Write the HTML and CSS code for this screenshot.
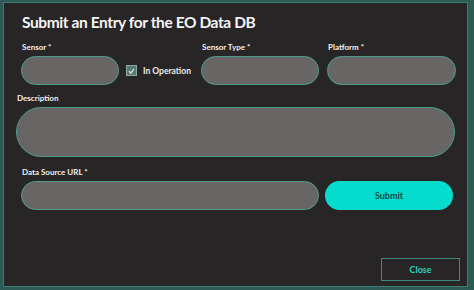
FILE: index.html
```html
<!DOCTYPE html>
<html lang="en">
<head>
    <meta charset="UTF-8">
    <title>Submit an Entry</title>
    <link rel="stylesheet" href="styles.css">
</head>
<body>
    <div class="modal">
        <h1 class="modal-title">Submit an Entry for the EO Data DB</h1>

        <form class="entry-form">
            <div class="row row-top">
                <div class="field field-sensor">
                    <label>Sensor *</label>
                    <input type="text" class="pill">
                </div>
                <label class="check">
                    <span class="check-box">
                        <svg width="7" height="6" viewBox="0 0 7 6"><path d="M1 3.2 L2.8 5 L6 1" fill="none" stroke="#e8e8e8" stroke-width="1.2"/></svg>
                    </span>
                    In Operation
                </label>
                <div class="field field-type">
                    <label>Sensor Type *</label>
                    <input type="text" class="pill">
                </div>
                <div class="field field-platform">
                    <label>Platform *</label>
                    <input type="text" class="pill">
                </div>
            </div>

            <div class="field field-desc">
                <label>Description</label>
                <textarea class="pill desc"></textarea>
            </div>

            <div class="row row-url">
                <div class="field field-url">
                    <label>Data Source URL *</label>
                    <input type="text" class="pill">
                </div>
                <button type="button" class="submit">Submit</button>
            </div>
        </form>

        <div class="footer">
            <button type="button" class="close">Close</button>
        </div>
    </div>
</body>
</html>
```

FILE: styles.css
```css
html, body {
    margin: 0;
    height: 100%;
}
body {
    background-color: #2c5a54;
    font-family: Lato, "Open Sans", sans-serif;
    padding: 2px 6px 3px 3px;
    box-sizing: border-box;
}
.modal {
    height: 100%;
    box-sizing: border-box;
    background-color: #282526;
    border: 1px solid #3d7c73;
    padding: 0 7px 5px 17px;
    display: flex;
    flex-direction: column;
}
.modal-title {
    color: #f4f4f4;
    font-size: 15.5px;
    font-weight: bold;
    letter-spacing: -0.4px;
    margin: 9px 0 0 1px;
    line-height: 20px;
}
.entry-form {
    margin-top: 10px;
}
.row {
    display: flex;
    align-items: flex-end;
}
.field label {
    display: block;
    color: #f0f0f0;
    font-size: 8px;
    font-weight: bold;
    line-height: 10px;
    margin: 0 0 4px 1px;
}
.pill {
    display: block;
    box-sizing: border-box;
    height: 29px;
    width: 100%;
    background-color: #676665;
    border: 1px solid #4e9c8e;
    border-radius: 15px;
    margin: 0;
    padding: 0 12px;
    outline: none;
}
.field-sensor { width: 98px; }
.field-type { width: 118px; margin-left: 10px; }
.field-platform { width: 129px; margin-left: 8px; }
.check {
    display: flex;
    align-items: center;
    height: 29px;
    margin-left: 7px;
    color: #ececec;
    font-size: 8.5px;
    font-weight: bold;
    gap: 6px;
}
.check-box {
    width: 11px;
    height: 11px;
    box-sizing: border-box;
    background-color: #5c7a74;
    border: 1px solid #8aa9a2;
    display: flex;
    align-items: center;
    justify-content: center;
}
.field-desc {
    margin: 8px 0 0 -5px;
}
.field-desc label {
    margin-left: 1px;
}
.desc {
    height: 50px;
    width: 439px;
    border-radius: 25px;
    resize: none;
}
.row-url {
    margin-top: 10px;
}
.field-url { width: 298px; }
.submit {
    width: 128px;
    height: 29px;
    margin-left: 6px;
    border: none;
    border-radius: 15px;
    background-color: #06dccd;
    color: #124a47;
    font-family: inherit;
    font-size: 9px;
    font-weight: bold;
}
.footer {
    margin-top: auto;
    display: flex;
    justify-content: flex-end;
}
.close {
    width: 79px;
    height: 23px;
    background: transparent;
    border: 1px solid #3e8a7e;
    color: #2fd2c2;
    font-family: inherit;
    font-size: 9px;
    font-weight: bold;
}
```
